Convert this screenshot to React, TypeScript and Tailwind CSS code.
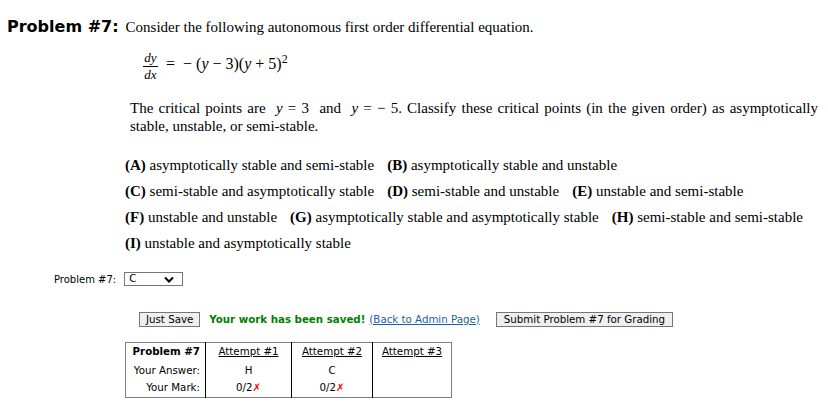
import React from "react";

const serif = { fontFamily: '"Liberation Serif", "Times New Roman", serif' };
const sans = { fontFamily: '"DejaVu Sans", Verdana, sans-serif' };

function Opt({ l, t }: { l: string; t: string }) {
  return (
    <span className="mr-[13px]">
      <b>({l})</b> {t}
    </span>
  );
}

export default function App() {
  return (
    <div className="w-[828px] h-[409px] bg-white text-black overflow-hidden relative">
      <div className="pt-[16px] pl-[7px] flex items-baseline">
        <span className="font-bold text-[16px] leading-[20px]" style={sans}>Problem #7:</span>
        <span className="ml-[7px] text-[15px]" style={serif}>
          Consider the following autonomous first order differential equation.
        </span>
      </div>

      <div className="ml-[143px] mt-[13px] flex items-center text-[16px]" style={serif}>
        <span className="inline-flex flex-col items-center text-[13px] leading-[12px] italic">
          <span>dy</span>
          <span className="block w-[15px] border-t border-black my-[2px]"></span>
          <span>dx</span>
        </span>
        <span className="ml-[8px] pb-[4px]">
          = &nbsp;− (<i>y</i> − 3)(<i>y</i> + 5)<sup className="text-[12px]">2</sup>
        </span>
      </div>

      <p className="ml-[130px] w-[688px] mt-[18px] text-[15px] leading-[18px] text-justify" style={serif}>
        The critical points are &nbsp;<i>y</i> = 3 &nbsp;and &nbsp;<i>y</i> = − 5. Classify these critical points (in the given order) as asymptotically stable, unstable, or semi-stable.
      </p>

      <div className="ml-[125px] mt-[17px] text-[15px] leading-[26px]" style={serif}>
        <div><Opt l="A" t="asymptotically stable and semi-stable" /><Opt l="B" t="asymptotically stable and unstable" /></div>
        <div><Opt l="C" t="semi-stable and asymptotically stable" /><Opt l="D" t="semi-stable and unstable" /><Opt l="E" t="unstable and semi-stable" /></div>
        <div><Opt l="F" t="unstable and unstable" /><Opt l="G" t="asymptotically stable and asymptotically stable" /><Opt l="H" t="semi-stable and semi-stable" /></div>
        <div><Opt l="I" t="unstable and asymptotically stable" /></div>
      </div>

      <div className="ml-[54px] mt-[16px] flex items-center text-[10px]" style={sans}>
        <span>Problem #7:</span>
        <div className="ml-[8px] w-[59px] h-[14px] border border-[#767676] flex items-center justify-between pl-[4px] pr-[8px]">
          <span className="text-[10px] leading-none">C</span>
          <svg width="10" height="7" viewBox="0 0 10 7"><path d="M1 1.5 L5 5.5 L9 1.5" stroke="#000" strokeWidth="2" fill="none" /></svg>
        </div>
      </div>

      <div className="ml-[139px] mt-[25px] flex items-center text-[10.25px]" style={sans}>
        <button className="h-[15px] px-[6px] border border-[#767676] bg-[#efefef] leading-none">Just Save</button>
        <span className="ml-[9px] font-bold text-[#008000]">Your work has been saved!</span>
        <a className="ml-[4px] text-[#1a5ea8] underline">(Back to Admin Page)</a>
        <button className="ml-[16px] h-[15px] px-[7px] border border-[#767676] bg-[#efefef] leading-none">Submit Problem #7 for Grading</button>
      </div>

      <table className="ml-[125px] mt-[15px] border border-[#808080] border-collapse text-[10.25px]" style={sans}>
        <tbody>
          <tr className="h-[19px]">
            <td className="w-[80px] text-right pr-[5px] font-bold border-r border-black">Problem #7</td>
            <td className="w-[86px] text-center underline border-r border-black">Attempt #1</td>
            <td className="w-[81px] text-center underline border-r border-black">Attempt #2</td>
            <td className="w-[79px] text-center underline">Attempt #3</td>
          </tr>
          <tr className="h-[18px]">
            <td className="text-right pr-[5px] border-r border-black">Your Answer:</td>
            <td className="text-center border-r border-black">H</td>
            <td className="text-center border-r border-black">C</td>
            <td></td>
          </tr>
          <tr className="h-[18px]">
            <td className="text-right pr-[5px] border-r border-black">Your Mark:</td>
            <td className="text-center border-r border-black">0/2<span className="text-[#ff0000]">✗</span></td>
            <td className="text-center border-r border-black">0/2<span className="text-[#ff0000]">✗</span></td>
            <td></td>
          </tr>
        </tbody>
      </table>
    </div>
  );
}
